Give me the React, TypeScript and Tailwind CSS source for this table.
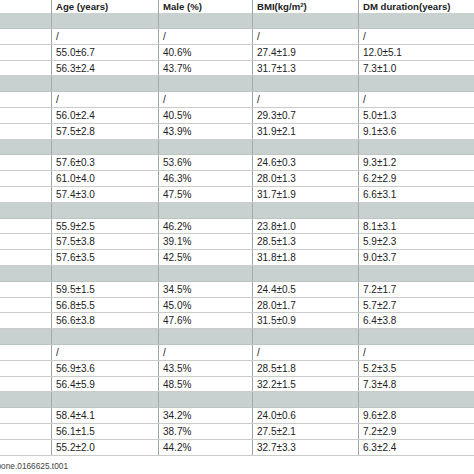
import React from "react";

type Row = { kind: "band" } | { kind: "data"; mark?: boolean; v: [string, string, string, string] };

const groups: [string, string, string, string][][] = [
  [["/", "/", "/", "/"], ["55.0±6.7", "40.6%", "27.4±1.9", "12.0±5.1"], ["56.3±2.4", "43.7%", "31.7±1.3", "7.3±1.0"]],
  [["/", "/", "/", "/"], ["56.0±2.4", "40.5%", "29.3±0.7", "5.0±1.3"], ["57.5±2.8", "43.9%", "31.9±2.1", "9.1±3.6"]],
  [["57.6±0.3", "53.6%", "24.6±0.3", "9.3±1.2"], ["61.0±4.0", "46.3%", "28.0±1.3", "6.2±2.9"], ["57.4±3.0", "47.5%", "31.7±1.9", "6.6±3.1"]],
  [["55.9±2.5", "46.2%", "23.8±1.0", "8.1±3.1"], ["57.5±3.8", "39.1%", "28.5±1.3", "5.9±2.3"], ["57.6±3.5", "42.5%", "31.8±1.8", "9.0±3.7"]],
  [["59.5±1.5", "34.5%", "24.4±0.5", "7.2±1.7"], ["56.8±5.5", "45.0%", "28.0±1.7", "5.7±2.7"], ["56.6±3.8", "47.6%", "31.5±0.9", "6.4±3.8"]],
  [["/", "/", "/", "/"], ["56.9±3.6", "43.5%", "28.5±1.8", "5.2±3.5"], ["56.4±5.9", "48.5%", "32.2±1.5", "7.3±4.8"]],
  [["58.4±4.1", "34.2%", "24.0±0.6", "9.6±2.8"], ["56.1±1.5", "38.7%", "27.5±2.1", "7.2±2.9"], ["55.2±2.0", "44.2%", "32.7±3.3", "6.3±2.4"]],
];

const rows: Row[] = [];
groups.forEach((g) => {
  rows.push({ kind: "band" });
  g.forEach((v, i) => rows.push({ kind: "data", mark: i === 1, v }));
});

const font = { fontFamily: '"Liberation Sans", Arial, sans-serif' };

export default function App() {
  return (
    <div className="w-[474px] h-[474px] bg-white overflow-hidden text-[#222]" style={font}>
      <div className="flex h-[13.3px] text-[9.6px] font-bold leading-none">
        <div className="w-[51px]" />
        <div className="w-[107px] border-l border-[#9ea7a5] pl-1 flex items-center">Age (years)</div>
        <div className="w-[94px] border-l border-[#9ea7a5] pl-1 flex items-center">Male (%)</div>
        <div className="w-[106px] border-l border-[#9ea7a5] pl-1 flex items-center">
          BMI(kg/m<sup className="text-[6px] relative -top-[2px]">2</sup>)
        </div>
        <div className="flex-1 border-l border-[#9ea7a5] pl-1 flex items-center">DM duration(years)</div>
      </div>
      {rows.map((r, idx) =>
        r.kind === "band" ? (
          <div key={idx} className="flex h-[15.8px] bg-[#c8d1cf] border-b border-[#bcc5c3]">
            <div className="w-[51px]" />
            <div className="w-[107px] border-l border-[#a2aba9]" />
            <div className="w-[94px] border-l border-[#a2aba9]" />
            <div className="w-[106px] border-l border-[#a2aba9]" />
            <div className="flex-1 border-l border-[#a2aba9]" />
          </div>
        ) : (
          <div key={idx} className="flex h-[15.8px] border-b border-[#c9cccb] text-[10px] leading-none">
            <div className="w-[51px] overflow-hidden flex items-start pt-[2px]">
              {r.mark && <span className="-ml-[4px] text-[7px] font-bold">#</span>}
            </div>
            <div className="w-[107px] border-l border-[#9ea7a5] pl-1 flex items-center pt-[1px]">{r.v[0]}</div>
            <div className="w-[94px] border-l border-[#9ea7a5] pl-1 flex items-center pt-[1px]">{r.v[1]}</div>
            <div className="w-[106px] border-l border-[#9ea7a5] pl-1 flex items-center pt-[1px]">{r.v[2]}</div>
            <div className="flex-1 border-l border-[#9ea7a5] pl-1 flex items-center pt-[1px]">{r.v[3]}</div>
          </div>
        )
      )}
      <div className="pt-[6px] text-[8.3px] leading-none text-[#444] -ml-[3.5px]">pone.0166625.t001</div>
    </div>
  );
}
